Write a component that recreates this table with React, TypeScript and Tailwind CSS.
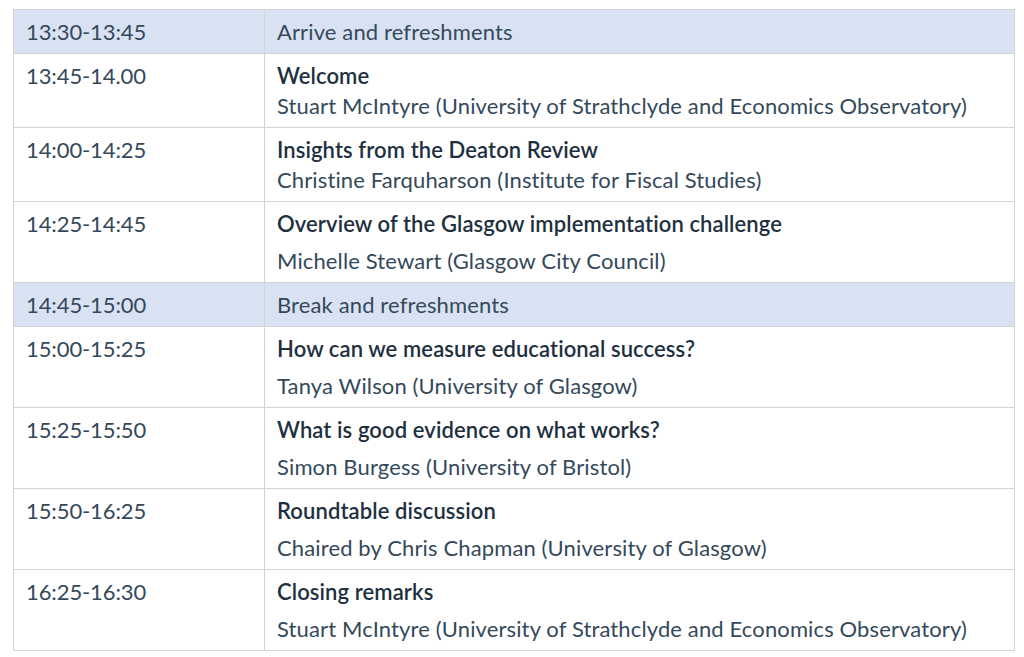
import React from "react";

type Row = { time: string; title?: string; sub?: string; text?: string; shaded?: boolean; tight?: boolean };

const rows: Row[] = [
  { time: "13:30-13:45", text: "Arrive and refreshments", shaded: true },
  { time: "13:45-14.00", title: "Welcome", sub: "Stuart McIntyre (University of Strathclyde and Economics Observatory)", tight: true },
  { time: "14:00-14:25", title: "Insights from the Deaton Review", sub: "Christine Farquharson (Institute for Fiscal Studies)", tight: true },
  { time: "14:25-14:45", title: "Overview of the Glasgow implementation challenge", sub: "Michelle Stewart (Glasgow City Council)" },
  { time: "14:45-15:00", text: "Break and refreshments", shaded: true },
  { time: "15:00-15:25", title: "How can we measure educational success?", sub: "Tanya Wilson (University of Glasgow)" },
  { time: "15:25-15:50", title: "What is good evidence on what works?", sub: "Simon Burgess (University of Bristol)" },
  { time: "15:50-16:25", title: "Roundtable discussion", sub: "Chaired by Chris Chapman (University of Glasgow)" },
  { time: "16:25-16:30", title: "Closing remarks", sub: "Stuart McIntyre (University of Strathclyde and Economics Observatory)" },
];

export default function App() {
  return (
    <div className="w-[1024px] h-[657px] bg-white pt-[9px] pl-[13px]" style={{ fontFamily: "Lato, 'Open Sans', sans-serif" }}>
      <table className="w-[1002px] border-collapse text-[22px] leading-[30px] text-[#34495a]">
        <tbody>
          {rows.map((r, i) => (
            <tr key={i} className={r.shaded ? "bg-[#d9e2f3]" : "bg-white"}>
              <td className="w-[251px] border border-[#d3d3d3] align-top pl-[12px] pt-[7px] pb-[6px] tracking-[-0.1px]">{r.time}</td>
              <td className="border border-[#d3d3d3] align-top pl-[12px] pt-[7px] pb-[6px] tracking-[0.13px]">
                {r.text ? (
                  r.text
                ) : (
                  <>
                    <div className="font-semibold text-[#1e3040] tracking-[0.1px]">{r.title}</div>
                    <div className={r.tight ? "" : "mt-[7px]"}>{r.sub}</div>
                  </>
                )}
              </td>
            </tr>
          ))}
        </tbody>
      </table>
    </div>
  );
}
